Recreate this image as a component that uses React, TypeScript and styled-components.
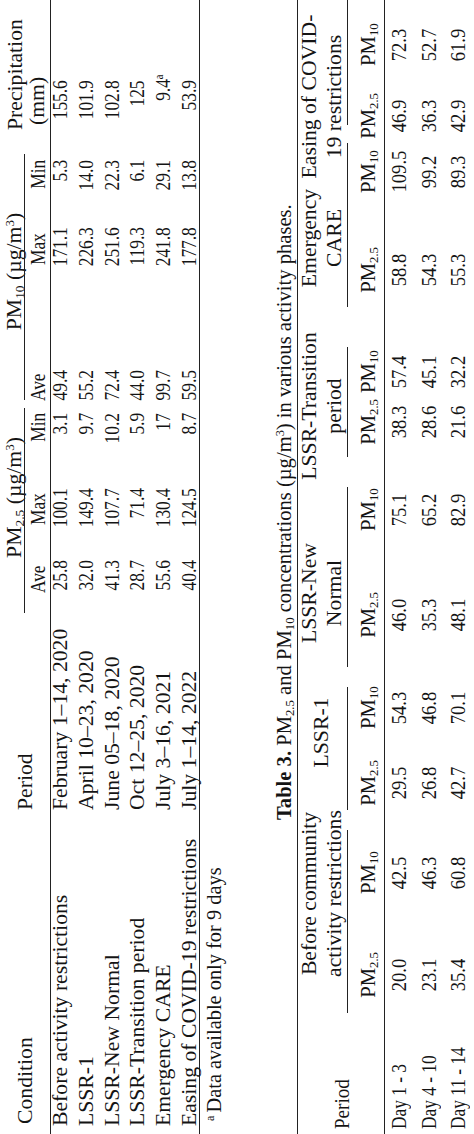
import React from "react";
import styled, { createGlobalStyle } from "styled-components";

const GlobalStyle = createGlobalStyle`
  html, body {
    margin: 0;
    padding: 0;
    background: #fff;
  }
  body {
    width: 474px;
    height: 1134px;
    overflow: hidden;
  }
`;

const Screen = styled.div`
  width: 474px;
  height: 1134px;
  overflow: hidden;
`;

// the page is typeset landscape and turned a quarter to the left
const Page = styled.div`
  width: 1134px;
  height: 474px;
  transform-origin: 0 0;
  transform: translateY(1134px) rotate(-90deg);
  font-family: "Liberation Serif", "Times New Roman", serif;
  font-size: 21.7px;
  color: #141414;
  background: #fff;
  white-space: nowrap;
`;

const Sub = styled.sub`
  font-size: 0.62em;
  vertical-align: -0.22em;
  line-height: 0;
`;

const Sup = styled.sup`
  font-size: 0.6em;
  vertical-align: 0.55em;
  line-height: 0;
`;

// the source pdf sets figures in the tables a little condensed
const Narrow = styled.span<{ $s?: number; $o?: string }>`
  display: inline-block;
  transform: scaleX(${(p) => p.$s ?? 0.8});
  transform-origin: ${(p) => p.$o ?? "100%"} 50%;
`;

/* ---------- table 2 ---------- */

const t2Cols = "324px 206px 44px 72px 75px 43px 143px 67px 160px";

const T2Head = styled.div`
  display: grid;
  grid-template-columns: ${t2Cols};
  grid-template-rows: 25px 25px;
  height: 50px;
  border-bottom: 1px solid #222;
`;

const HeadCell = styled.div<{ $col: string; $row: string; $pt?: number; $align?: string; $pl?: number; $pr?: number }>`
  grid-column: ${(p) => p.$col};
  grid-row: ${(p) => p.$row};
  line-height: 25px;
  padding-top: ${(p) => p.$pt ?? 0}px;
  padding-left: ${(p) => p.$pl ?? 0}px;
  padding-right: ${(p) => p.$pr ?? 0}px;
  text-align: ${(p) => p.$align ?? "left"};
`;

const GroupCell = styled(HeadCell)<{ $from: number; $to: number }>`
  text-align: center;
  position: relative;
  &::after {
    content: "";
    position: absolute;
    bottom: 0;
    left: ${(p) => p.$from}px;
    right: ${(p) => p.$to}px;
    border-bottom: 1px solid #222;
  }
`;

const PrecipCell = styled.div`
  grid-column: 9;
  grid-row: 1 / 3;
  line-height: 22px;
  padding-top: 4px;
  padding-left: 30px;
  & span {
    display: block;
  }
  & span + span {
    padding-left: 5px;
  }
`;

const T2Body = styled.div`
  height: 148px;
  border-bottom: 1px solid #222;
`;

const T2Row = styled.div`
  display: grid;
  grid-template-columns: ${t2Cols};
  height: 25.8px;
  line-height: 18.6px;
`;

const TextCell = styled.div<{ $pl?: number }>`
  padding-left: ${(p) => p.$pl ?? 0}px;
`;

const NumCell = styled.div<{ $pr?: number }>`
  text-align: right;
  padding-right: ${(p) => p.$pr ?? 0}px;
`;

const Footnote = styled.div`
  line-height: 28px;
  font-size: 20.4px;
  padding-left: 13px;
  & sup {
    margin-right: 3px;
  }
`;

/* ---------- caption ---------- */

const Caption = styled.div`
  margin-top: 44px;
  line-height: 25px;
  font-size: 20.6px;
  padding-left: 314px;
  & b {
    font-weight: bold;
  }
`;

/* ---------- table 3 ---------- */

const t3Cols = "113px 92px 112px 68px 82px 104px 106px 70px 30px 174px 22px 90px 52px 19px";

const T3Head = styled.div`
  display: grid;
  grid-template-columns: ${t3Cols};
  grid-template-rows: 50px 36px;
  border-top: 1px solid #222;
  border-bottom: 1px solid #222;
`;

const T3Period = styled.div`
  grid-column: 1;
  grid-row: 1 / 3;
  line-height: 25px;
  padding-top: 32px;
  padding-left: 5px;
`;

const T3Group = styled.div<{ $col: number; $ml: number; $mr: number; $shift: number }>`
  grid-column: ${(p) => p.$col} / span 2;
  grid-row: 1;
  display: flex;
  flex-direction: column;
  justify-content: center;
  align-items: center;
  line-height: 25px;
  padding-bottom: 2px;
  margin-left: ${(p) => p.$ml}px;
  margin-right: ${(p) => p.$mr}px;
  padding-left: ${(p) => Math.max(0, p.$shift * 2)}px;
  padding-right: ${(p) => Math.max(0, -p.$shift * 2)}px;
  border-bottom: 1px solid #222;
  box-sizing: border-box;
`;

const T3Sub = styled.div<{ $col: number }>`
  grid-column: ${(p) => p.$col};
  grid-row: 2;
  display: flex;
  justify-content: center;
  line-height: 36px;
  padding-top: 2px;
`;

const T3Row = styled.div`
  display: grid;
  grid-template-columns: ${t3Cols};
  height: 29.7px;
  line-height: 29.4px;
`;

const T3Label = styled.div`
  padding-left: 5px;
`;

const T3Num = styled.div`
  display: flex;
  justify-content: center;
`;

type T2Data = {
  cond: string;
  period: string;
  pm25: string[];
  pm10: string[];
  rain: string;
  note?: boolean;
};

const table2: T2Data[] = [
  { cond: "Before activity restrictions", period: "February 1\u201314, 2020", pm25: ["25.8", "100.1", "3.1"], pm10: ["49.4", "171.1", "5.3"], rain: "155.6" },
  { cond: "LSSR-1", period: "April 10\u201323, 2020", pm25: ["32.0", "149.4", "9.7"], pm10: ["55.2", "226.3", "14.0"], rain: "101.9" },
  { cond: "LSSR-New Normal", period: "June 05\u201318, 2020", pm25: ["41.3", "107.7", "10.2"], pm10: ["72.4", "251.6", "22.3"], rain: "102.8" },
  { cond: "LSSR-Transition period", period: "Oct 12\u201325, 2020", pm25: ["28.7", "71.4", "5.9"], pm10: ["44.0", "119.3", "6.1"], rain: "125" },
  { cond: "Emergency CARE", period: "July 3\u201316, 2021", pm25: ["55.6", "130.4", "17"], pm10: ["99.7", "241.8", "29.1"], rain: "9.4", note: true },
  { cond: "Easing of COVID-19 restrictions", period: "July 1\u201314, 2022", pm25: ["40.4", "124.5", "8.7"], pm10: ["59.5", "177.8", "13.8"], rain: "53.9" },
];

const groups3: { lines: string[]; col: number; ml: number; mr: number; shift: number }[] = [
  { lines: ["Before community", "activity restrictions"], col: 2, ml: 8, mr: 13, shift: 28 },
  { lines: ["LSSR-1"], col: 4, ml: 7, mr: 20, shift: 16 },
  { lines: ["LSSR-New", "Normal"], col: 6, ml: 0, mr: 30, shift: -16 },
  { lines: ["LSSR-Transition", "period"], col: 8, ml: 0, mr: -10, shift: -4 },
  { lines: ["Emergency", "CARE"], col: 10, ml: 50, mr: -18, shift: -13 },
  { lines: ["Easing of COVID-", "19 restrictions"], col: 12, ml: 36, mr: -19, shift: -34 },
];

const table3: { label: string; values: string[] }[] = [
  { label: "Day 1 - 3", values: ["20.0", "42.5", "29.5", "54.3", "46.0", "75.1", "38.3", "57.4", "58.8", "109.5", "46.9", "72.3"] },
  { label: "Day 4 - 10", values: ["23.1", "46.3", "26.8", "46.8", "35.3", "65.2", "28.6", "45.1", "54.3", "99.2", "36.3", "52.7"] },
  { label: "Day 11 - 14", values: ["35.4", "60.8", "42.7", "70.1", "48.1", "82.9", "21.6", "32.2", "55.3", "89.3", "42.9", "61.9"] },
];

const PM25 = () => (
  <>
    PM<Sub>2.5</Sub>
  </>
);

const PM10 = () => (
  <>
    PM<Sub>10</Sub>
  </>
);

const App = () => {
  return (
    <Screen>
      <GlobalStyle />
      <Page>
        <T2Head>
          <HeadCell $col="1" $row="1 / 3" $pt={12.7} $pl={10}>
            Condition
          </HeadCell>
          <HeadCell $col="2" $row="1 / 3" $pt={12.7}>
            Period
          </HeadCell>
          <GroupCell $col="3 / 6" $row="1" $pt={1.7} $from={-9} $to={-5} $pl={22}>
            <PM25 /> (µg/m<Sup>3</Sup>)
          </GroupCell>
          <GroupCell $col="6 / 9" $row="1" $pt={1.7} $from={13} $to={-6} $pl={30}>
            <PM10 /> (µg/m<Sup>3</Sup>)
          </GroupCell>
          <PrecipCell>
            <span>Precipitation</span>
            <span>(mm)</span>
          </PrecipCell>
          <HeadCell $col="3" $row="2" $pt={1} $align="right" $pr={5}><Narrow>Ave</Narrow></HeadCell>
          <HeadCell $col="4" $row="2" $pt={1} $align="right" $pr={5}><Narrow>Max</Narrow></HeadCell>
          <HeadCell $col="5" $row="2" $pt={1} $align="right"><Narrow>Min</Narrow></HeadCell>
          <HeadCell $col="6" $row="2" $pt={1} $align="right" $pr={3}><Narrow>Ave</Narrow></HeadCell>
          <HeadCell $col="7" $row="2" $pt={1} $align="right" $pr={6}><Narrow>Max</Narrow></HeadCell>
          <HeadCell $col="8" $row="2" $pt={1} $align="right"><Narrow>Min</Narrow></HeadCell>
        </T2Head>
        <T2Body>
          {table2.map((r) => (
            <T2Row key={r.cond}>
              <TextCell $pl={8}>{r.cond}</TextCell>
              <TextCell>{r.period}</TextCell>
              {r.pm25.map((v, i) => (
                <NumCell key={"a" + i}><Narrow>{v}</Narrow></NumCell>
              ))}
              {r.pm10.map((v, i) => (
                <NumCell key={"b" + i}><Narrow>{v}</Narrow></NumCell>
              ))}
              <NumCell $pr={80}>
                <Narrow>
                  {r.rain}
                  {r.note && <Sup style={{ marginRight: -7 }}>a</Sup>}
                </Narrow>
              </NumCell>
            </T2Row>
          ))}
        </T2Body>
        <Footnote>
          <Sup>a</Sup>Data available only for 9 days
        </Footnote>

        <Caption>
          <b>Table 3.</b> <PM25 /> and <PM10 /> concentrations (µg/m<Sup>3</Sup>) in various activity phases.
        </Caption>

        <T3Head>
          <T3Period>
            <Narrow $s={0.88} $o="0">Period</Narrow>
          </T3Period>
          {groups3.map((g) => (
            <T3Group key={g.col} $col={g.col} $ml={g.ml} $mr={g.mr} $shift={g.shift}>
              {g.lines.map((l) => (
                <span key={l}>{l}</span>
              ))}
            </T3Group>
          ))}
          {groups3.map((g) => (
            <React.Fragment key={"s" + g.col}>
              <T3Sub $col={g.col}>
                <Narrow $s={0.95} $o="50%"><PM25 /></Narrow>
              </T3Sub>
              <T3Sub $col={g.col + 1}>
                <Narrow $s={0.95} $o="50%"><PM10 /></Narrow>
              </T3Sub>
            </React.Fragment>
          ))}
        </T3Head>
        {table3.map((r) => (
          <T3Row key={r.label}>
            <T3Label>
              <Narrow $s={0.8} $o="0">{r.label}</Narrow>
            </T3Label>
            {r.values.map((v, i) => (
              <T3Num key={i}>
                <Narrow $s={0.86} $o="50%">{v}</Narrow>
              </T3Num>
            ))}
          </T3Row>
        ))}
      </Page>
    </Screen>
  );
};

export default App;
